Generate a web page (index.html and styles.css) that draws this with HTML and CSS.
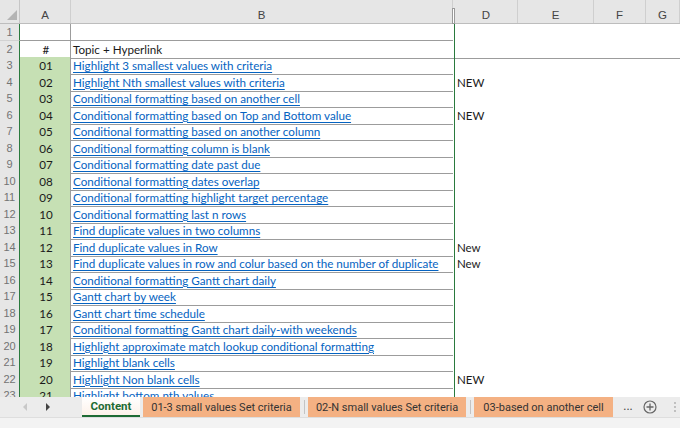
FILE: index.html
```html
<!DOCTYPE html>
<html>
<head>
<meta charset="utf-8">
<link rel="stylesheet" href="styles.css">
</head>
<body>
<div class="app">
  <div class="sheet">
    <div class="row hdr">
      <div class="corner"><svg width="10" height="10" viewBox="0 0 10 10"><polygon points="10,0 10,10 0,10" fill="#b4b4b4"/></svg></div>
      <div class="ch">A</div>
      <div class="ch">B</div>
      <div class="ch hid"><span class="hidmark"></span></div>
      <div class="ch">D</div>
      <div class="ch">E</div>
      <div class="ch">F</div>
      <div class="ch">G</div>
    </div>
    <div class="row top"><div class="rh">1</div><div class="a"></div><div class="b"></div><div class="c"></div><div class="d"></div><div class="e"></div><div class="f"></div><div class="g"></div></div>
    <div class="row top line"><div class="rh">2</div><div class="a">#</div><div class="b plain">Topic + Hyperlink</div><div class="c"></div><div class="d"></div><div class="e"></div><div class="f"></div><div class="g"></div></div>
    <div class="row"><div class="rh">3</div><div class="a">01</div><div class="b"><span class="lnk">Highlight 3 smallest values with criteria</span></div><div class="c"></div><div class="d"></div><div class="e"></div><div class="f"></div><div class="g"></div></div>
    <div class="row"><div class="rh">4</div><div class="a">02</div><div class="b"><span class="lnk">Highlight Nth smallest values with criteria</span></div><div class="c"></div><div class="d">NEW</div><div class="e"></div><div class="f"></div><div class="g"></div></div>
    <div class="row"><div class="rh">5</div><div class="a">03</div><div class="b"><span class="lnk">Conditional formatting based on another cell</span></div><div class="c"></div><div class="d"></div><div class="e"></div><div class="f"></div><div class="g"></div></div>
    <div class="row"><div class="rh">6</div><div class="a">04</div><div class="b"><span class="lnk">Conditional formatting based on Top and Bottom value</span></div><div class="c"></div><div class="d">NEW</div><div class="e"></div><div class="f"></div><div class="g"></div></div>
    <div class="row"><div class="rh">7</div><div class="a">05</div><div class="b"><span class="lnk">Conditional formatting based on another column</span></div><div class="c"></div><div class="d"></div><div class="e"></div><div class="f"></div><div class="g"></div></div>
    <div class="row"><div class="rh">8</div><div class="a">06</div><div class="b"><span class="lnk">Conditional formatting column is blank</span></div><div class="c"></div><div class="d"></div><div class="e"></div><div class="f"></div><div class="g"></div></div>
    <div class="row"><div class="rh">9</div><div class="a">07</div><div class="b"><span class="lnk">Conditional formatting date past due</span></div><div class="c"></div><div class="d"></div><div class="e"></div><div class="f"></div><div class="g"></div></div>
    <div class="row"><div class="rh">10</div><div class="a">08</div><div class="b"><span class="lnk">Conditional formatting dates overlap</span></div><div class="c"></div><div class="d"></div><div class="e"></div><div class="f"></div><div class="g"></div></div>
    <div class="row"><div class="rh">11</div><div class="a">09</div><div class="b"><span class="lnk">Conditional formatting highlight target percentage</span></div><div class="c"></div><div class="d"></div><div class="e"></div><div class="f"></div><div class="g"></div></div>
    <div class="row"><div class="rh">12</div><div class="a">10</div><div class="b"><span class="lnk">Conditional formatting last n rows</span></div><div class="c"></div><div class="d"></div><div class="e"></div><div class="f"></div><div class="g"></div></div>
    <div class="row"><div class="rh">13</div><div class="a">11</div><div class="b"><span class="lnk">Find duplicate values in two columns</span></div><div class="c"></div><div class="d"></div><div class="e"></div><div class="f"></div><div class="g"></div></div>
    <div class="row"><div class="rh">14</div><div class="a">12</div><div class="b"><span class="lnk">Find duplicate values in Row</span></div><div class="c"></div><div class="d">New</div><div class="e"></div><div class="f"></div><div class="g"></div></div>
    <div class="row"><div class="rh">15</div><div class="a">13</div><div class="b"><span class="lnk">Find duplicate values in row and colur based on the number of duplicate</span></div><div class="c"></div><div class="d">New</div><div class="e"></div><div class="f"></div><div class="g"></div></div>
    <div class="row"><div class="rh">16</div><div class="a">14</div><div class="b"><span class="lnk">Conditional formatting Gantt chart daily</span></div><div class="c"></div><div class="d"></div><div class="e"></div><div class="f"></div><div class="g"></div></div>
    <div class="row"><div class="rh">17</div><div class="a">15</div><div class="b"><span class="lnk">Gantt chart by week</span></div><div class="c"></div><div class="d"></div><div class="e"></div><div class="f"></div><div class="g"></div></div>
    <div class="row"><div class="rh">18</div><div class="a">16</div><div class="b"><span class="lnk">Gantt chart time schedule</span></div><div class="c"></div><div class="d"></div><div class="e"></div><div class="f"></div><div class="g"></div></div>
    <div class="row"><div class="rh">19</div><div class="a">17</div><div class="b"><span class="lnk">Conditional formatting Gantt chart daily-with weekends</span></div><div class="c"></div><div class="d"></div><div class="e"></div><div class="f"></div><div class="g"></div></div>
    <div class="row"><div class="rh">20</div><div class="a">18</div><div class="b"><span class="lnk">Highlight approximate match lookup conditional formatting</span></div><div class="c"></div><div class="d"></div><div class="e"></div><div class="f"></div><div class="g"></div></div>
    <div class="row"><div class="rh">21</div><div class="a">19</div><div class="b"><span class="lnk">Highlight blank cells</span></div><div class="c"></div><div class="d"></div><div class="e"></div><div class="f"></div><div class="g"></div></div>
    <div class="row"><div class="rh">22</div><div class="a">20</div><div class="b"><span class="lnk">Highlight Non blank cells</span></div><div class="c"></div><div class="d">NEW</div><div class="e"></div><div class="f"></div><div class="g"></div></div>
    <div class="row last"><div class="rh">23</div><div class="a">21</div><div class="b"><span class="lnk">Highlight bottom nth values</span></div><div class="c"></div><div class="d"></div><div class="e"></div><div class="f"></div><div class="g"></div></div>
  </div>
  <div class="tabbar">
    <div class="nav">
      <svg class="arr" width="6" height="8" viewBox="0 0 6 8"><polygon points="5,0 5,8 1,4" fill="#c8c8c8"/></svg>
      <svg class="arr" width="6" height="8" viewBox="0 0 6 8"><polygon points="1,0 1,8 5,4" fill="#444"/></svg>
    </div>
    <div class="tab active">Content</div>
    <div class="tab t1">01-3 small values Set criteria</div>
    <div class="sep"></div>
    <div class="tab t2">02-N small values Set criteria</div>
    <div class="sep"></div>
    <div class="tab t3">03-based on another cell</div>
    <div class="more">...</div>
    <div class="add"><svg width="14" height="14" viewBox="0 0 14 14"><circle cx="7" cy="7" r="6" fill="none" stroke="#666" stroke-width="1.2"/><path d="M7 3.5V10.5M3.5 7H10.5" stroke="#666" stroke-width="1.3"/></svg></div>
    <div class="vdots"><svg width="4" height="12" viewBox="0 0 4 12"><circle cx="2" cy="2" r="0.9" fill="#aaa"/><circle cx="2" cy="6" r="0.9" fill="#aaa"/><circle cx="2" cy="10" r="0.9" fill="#aaa"/></svg></div>
  </div>
  <div class="status"></div>
</div>
</body>
</html>
```
FILE: styles.css
```css
* { box-sizing: border-box; }
html, body { margin: 0; padding: 0; }
body { width: 680px; height: 428px; overflow: hidden; background: #fff; font-family: "Lato", "Liberation Sans", sans-serif; }
.app { width: 680px; height: 428px; display: flex; flex-direction: column; }
.sheet { height: 397px; overflow: hidden; flex: none; }
.row {
  display: grid;
  grid-template-columns: 20px 51px 382px 2px 63px 76px 52px 1fr;
  height: 16.5px;
  font-size: 11.65px;
  color: #1a1a1a;
}
.row > div { height: 100%; white-space: nowrap; overflow: visible; }
.row.last { height: 10px; overflow: hidden; }
.row.last > div { height: 16.5px; }
.hdr { height: 24px; background: #e6e6e6; border-bottom: 1px solid #bdbdbd; }
.corner { display: flex; align-items: flex-end; justify-content: flex-end; padding: 0 2px 3px 0; border-right: 1px solid #c6c6c6; }
.ch { font-family: "Liberation Sans", sans-serif; font-size: 11.5px; color: #444; text-align: center; padding-top: 9px; border-right: 1px solid #cfcfcf; }
.ch.hid { border-right: none; position: relative; }
.hidmark { position: absolute; left: -1px; top: 8px; width: 3px; height: 16px; background: #fff; border: 1px solid #9a9a9a; }
.rh {
  background: #e6e6e6; color: #737373; text-align: center;
  font-family: "Liberation Sans", sans-serif; font-size: 11px;
  border-bottom: 1px solid #d2d2d2; line-height: 16px;
  border-right: 1px solid #2a7a3e;
}
.a { background: #c6e0b4; text-align: center; border-bottom: 1px solid #9c9c9c; border-right: 1px solid #9c9c9c; line-height: 16px; padding-top: 1px; padding-left: 2px; }
.b { border-bottom: 1px solid #9c9c9c; padding-left: 2px; line-height: 16px; padding-top: 1px; }
.c { border-right: 1px solid #2a7a3e; }
.d { padding-left: 2px; line-height: 16px; padding-top: 1px; font-size: 11.5px; }
.top .a { background: #fff; }
.line .d, .line .e, .line .f, .line .g, .line .c { border-bottom: 1px solid #9c9c9c; }
.lnk { color: #0563c1; text-decoration: underline; text-underline-offset: 2px; }
.tabbar {
  height: 21px; flex: none; background: #ececec; display: flex; align-items: stretch;
  font-family: "Roboto", sans-serif; font-size: 11px; color: #333;
  border-bottom: 1px solid #dedede;
}
.nav { width: 82px; display: flex; align-items: center; padding-left: 22px; gap: 17px; }
.tab { display: flex; align-items: center; justify-content: center; white-space: nowrap; height: 20px; }
.active { width: 58px; background: linear-gradient(#ffffff, #fdf2ea); color: #1e6b34; font-weight: bold; font-size: 11.5px; border-bottom: 2px solid #1e6b34; margin-right: 3px; }
.t1, .t2, .t3 { background: #f4b183; }
.t1 { width: 157px; }
.t2 { width: 158px; }
.t3 { width: 139px; }
.sep { width: 1px; background: #c4c4c4; margin: 3px 3px 3px 4px; }
.more { width: 30px; display: flex; align-items: center; justify-content: center; color: #444; font-size: 12px; padding-bottom: 3px; }
.add { width: 14px; display: flex; align-items: center; margin-left: 0; }
.vdots { display: flex; align-items: center; margin-left: 16px; }
.status { flex: 1; background: #f3f3f3; }
```
